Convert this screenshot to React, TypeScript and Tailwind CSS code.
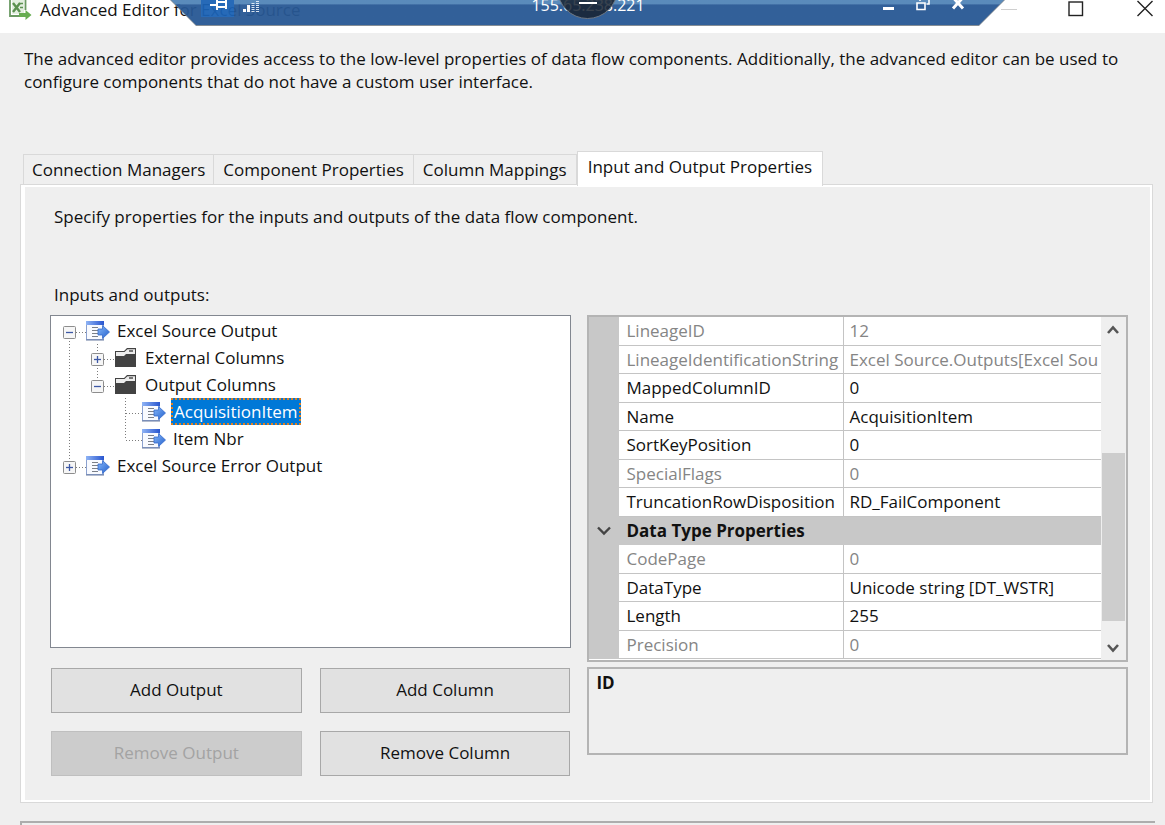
import React from "react";

type Guide = "plus" | "minus" | "plus-end" | "minus-end" | "minus-root" | "line" | "tee" | "corner" | "blank";

function GuideCell({ kind }: { kind: Guide }) {
  const dots = { stroke: "#7c7c7c", strokeWidth: 1, strokeDasharray: "1 2" };
  const box = kind.startsWith("plus") || kind.startsWith("minus");
  const top = kind !== "blank" && kind !== "minus-root";
  const bottom = kind === "line" || kind === "tee" || kind === "plus" || kind === "minus-root";
  return (
    <svg width="28" height="27" viewBox="0 0 28 27" className="shrink-0" aria-hidden="true">
      {top && <path d="M11.5 0V15" {...dots} />}
      {bottom && <path d="M11.5 15V27" {...dots} />}
      {kind !== "line" && kind !== "blank" && <path d="M12 15.5H28" {...dots} />}
      {box && (
        <>
          <rect x="5.5" y="9.5" width="12" height="12" rx="1" fill="#f6f6f6" stroke="#8d8d8d" />
          <path d="M8 15.5H15" stroke="#3d58a5" strokeWidth="1.3" />
          {kind.startsWith("plus") && <path d="M11.5 12V19" stroke="#3d58a5" strokeWidth="1.3" />}
        </>
      )}
    </svg>
  );
}

function OutputIcon() {
  return (
    <svg width="24" height="22" viewBox="0 0 24 22" className="shrink-0" aria-hidden="true">
      <defs>
        <linearGradient id="head" x1="0" x2="1">
          <stop offset="0" stopColor="#8fb4f5" />
          <stop offset="1" stopColor="#2855cf" />
        </linearGradient>
        <linearGradient id="arrow" x1="0" y1="0" x2="1" y2="1">
          <stop offset="0" stopColor="#86b8fa" />
          <stop offset="1" stopColor="#2460cc" />
        </linearGradient>
      </defs>
      <rect x="0.5" y="1.5" width="17" height="18" fill="#f8faff" stroke="#8ba1cf" />
      <rect x="0" y="1" width="18" height="4" fill="url(#head)" />
      <path d="M0 20H18" stroke="#687aa0" strokeWidth="1" />
      <path d="M6 7.5H12M6 10.5H12M6 13.5H12M6 16.5H12" stroke="#7a7f88" strokeWidth="1.2" />
      <path d="M12 9H16.5V5.5L23.5 12L16.5 18.5V15H12Z" fill="url(#arrow)" stroke="#356bcc" strokeWidth="0.8" />
    </svg>
  );
}

function FolderIcon() {
  return (
    <svg width="24" height="22" viewBox="0 0 24 22" className="shrink-0" aria-hidden="true">
      <path d="M1 20V4H10L13 1H22V20Z" fill="#424242" />
      <path d="M2 5H10.5L13.5 2.2H21V7H12L10 9H2Z" fill="#ececec" />
      <path d="M15 4H19" stroke="#424242" strokeWidth="1.4" />
    </svg>
  );
}

interface Node {
  label: string;
  guides: Guide[];
  folder?: boolean;
  selected?: boolean;
}

const nodes: Node[] = [
  { label: "Excel Source Output", guides: ["minus-root"] },
  { label: "External Columns", guides: ["line", "plus"], folder: true },
  { label: "Output Columns", guides: ["line", "minus-end"], folder: true },
  { label: "AcquisitionItem", guides: ["line", "blank", "tee"], selected: true },
  { label: "Item Nbr", guides: ["line", "blank", "corner"] },
  { label: "Excel Source Error Output", guides: ["plus-end"] },
];

interface Property {
  name: string;
  value?: string;
  readOnly?: boolean;
}

const properties: Property[] = [
  { name: "LineageID", value: "12", readOnly: true },
  { name: "LineageIdentificationString", value: "Excel Source.Outputs[Excel Sou", readOnly: true },
  { name: "MappedColumnID", value: "0" },
  { name: "Name", value: "AcquisitionItem" },
  { name: "SortKeyPosition", value: "0" },
  { name: "SpecialFlags", value: "0", readOnly: true },
  { name: "TruncationRowDisposition", value: "RD_FailComponent" },
  { name: "Data Type Properties" },
  { name: "CodePage", value: "0", readOnly: true },
  { name: "DataType", value: "Unicode string [DT_WSTR]" },
  { name: "Length", value: "255" },
  { name: "Precision", value: "0", readOnly: true },
];

const tabs = ["Connection Managers", "Component Properties", "Column Mappings"];

function TitleBar() {
  return (
    <header className="flex h-[33px] items-start bg-white pl-2">
      <svg width="24" height="20" viewBox="0 0 24 20" className="mr-2 shrink-0" aria-hidden="true">
        <path d="M2 0V16H15" fill="none" stroke="#6b9a63" strokeWidth="1.8" />
        <path d="M17.5 0V10" fill="none" stroke="#6b9a63" strokeWidth="1.8" />
        <path d="M4 0H16V14H4Z" fill="#e3efe0" />
        <path d="M5 3L12 12M12 3L5 12" stroke="#5b9150" strokeWidth="2.4" />
        <path d="M11 3.5H15M12 7.5H15" stroke="#5b9150" strokeWidth="1.3" />
        <path d="M11 13H17.5V10L23.5 15L17.5 20V17H11Z" fill="#67ad51" />
      </svg>
      <h1 className="grow text-[17px] leading-5 whitespace-nowrap">Advanced Editor for Excel Source</h1>
      <div className="flex">
        <button aria-label="Minimize" className="flex w-[68px] justify-center">
          <svg width="16" height="18" viewBox="0 0 16 18"><path d="M0 9.5H16" stroke="#cfcfcf" /></svg>
        </button>
        <button aria-label="Maximize" className="flex w-[66px] justify-center">
          <svg width="16" height="18" viewBox="0 0 16 18"><rect x="1" y="2" width="13.5" height="13.5" fill="none" stroke="#222" strokeWidth="1.4" /></svg>
        </button>
        <button aria-label="Close" className="flex w-[56px] justify-center pl-4">
          <svg width="16" height="18" viewBox="0 0 16 18"><path d="M0.5 1L15.5 16M15.5 1L0.5 16" stroke="#222" strokeWidth="1.4" /></svg>
        </button>
      </div>
    </header>
  );
}

function RemoteBar() {
  return (
    <div className="absolute top-0 right-[160px] left-[170px] h-[26px] bg-[#808890] [clip-path:polygon(0_0,100%_0,calc(100%_-_26px)_100%,26px_100%)] opacity-95">
      <div className="h-[25px] bg-linear-to-b from-[#5285b8] from-15% via-[#285894] via-20% to-[#285894] [clip-path:polygon(1px_0,calc(100%_-_1px)_0,calc(100%_-_26px)_100%,26px_100%)]">
        <div className="flex h-full items-start justify-between pr-10 pl-[31px]">
          <div className="flex w-[92px] gap-2">
            <button aria-label="Pin" className="flex h-[17px] w-[33px] justify-center bg-[#1c62b5] pl-[3px]">
              <svg width="20" height="11" viewBox="0 0 20 11"><path d="M1 5H8M8 0V10M8 2H17M8 7H17M17 0V9" fill="none" stroke="#fff" strokeWidth="2" /></svg>
            </button>
            <svg width="18" height="13" viewBox="0 0 18 13" role="img" aria-label="Signal strength">
              <path d="M2.5 12V9M6.5 12V5" stroke="#fff" strokeWidth="3" />
              <path d="M11 12V2M15.5 12V0" stroke="#dce8f5" strokeWidth="3" strokeDasharray="1 1" />
            </svg>
          </div>
          <span className="text-base leading-[11px] text-white">155.65.238.221</span>
          <div className="flex w-[82px] justify-between">
            <button aria-label="Minimize session"><svg width="12" height="12" viewBox="0 0 12 12"><path d="M0 8.5H11" stroke="#fff" strokeWidth="3" /></svg></button>
            <button aria-label="Restore session"><svg width="15" height="12" viewBox="0 0 15 12"><path d="M1 3H9V9.5H1ZM4 0V1M13 0V4H10.5" fill="none" stroke="#fff" strokeWidth="1.6" /></svg></button>
            <button aria-label="Close session"><svg width="14" height="12" viewBox="0 0 14 12"><path d="M2.5 -2L12 8.5M11.5 -2L2 8.5" stroke="#fff" strokeWidth="3" /></svg></button>
          </div>
        </div>
      </div>
      <div className="absolute inset-x-0 -top-[42px] mx-auto flex size-[61px] items-end justify-center rounded-full border border-[#66707c] bg-[#0b1626]/85 pb-[14px]">
        <div className="h-[2px] w-[18px] bg-white" />
      </div>
    </div>
  );
}

function PropertyGrid() {
  return (
    <div className="flex h-[347px] overflow-hidden border-2 border-[#b4b4b4] bg-white">
      <table className="h-[342px] min-w-0 grow table-fixed border-separate border-spacing-0">
        <colgroup>
          <col className="w-[30px]" />
          <col className="w-[225px]" />
          <col />
        </colgroup>
        <tbody>
          {properties.map((p) =>
            p.value === undefined ? (
              <tr key={p.name} className="h-[28px] bg-[#c8c8c8]">
                <td className="p-0">
                  <svg width="14" height="10" viewBox="0 0 14 10" className="mx-auto" aria-hidden="true">
                    <path d="M1 1.5L7 7.5L13 1.5" fill="none" stroke="#444" strokeWidth="2.4" />
                  </svg>
                </td>
                <th colSpan={2} scope="rowgroup" className="p-0 pl-[7px] text-left leading-6 font-bold">
                  {p.name}
                </th>
              </tr>
            ) : (
              <tr key={p.name} className={p.readOnly ? "text-[#858585] odd:h-[29px] even:h-[28px]" : "odd:h-[29px] even:h-[28px]"}>
                <td className="bg-[#c8c8c8] p-0" />
                <th scope="row" className="border-r border-b border-[#c4c4c4] p-0 pl-[7px] text-left leading-6 font-normal whitespace-nowrap">
                  {p.name}
                </th>
                <td className="overflow-hidden border-b border-[#c4c4c4] p-0 pl-[5px] leading-6 whitespace-nowrap">{p.value}</td>
              </tr>
            ),
          )}
        </tbody>
      </table>
      <div className="flex w-[25px] shrink-0 flex-col bg-[#efefef] px-px">
        <button aria-label="Scroll up" className="flex h-[25px] items-center justify-center">
          <svg width="12" height="10" viewBox="0 0 12 10"><path d="M1 8L6 2.5L11 8" fill="none" stroke="#555" strokeWidth="2.6" /></svg>
        </button>
        <div className="grow-[112]" />
        <div className="h-[168px] bg-[#cdcdcd]" />
        <div className="grow-[14]" />
        <button aria-label="Scroll down" className="flex h-[25px] items-center justify-center">
          <svg width="12" height="10" viewBox="0 0 12 10"><path d="M1 2L6 7.5L11 2" fill="none" stroke="#555" strokeWidth="2.6" /></svg>
        </button>
      </div>
    </div>
  );
}

function PushButton({ children, disabled }: { children: string; disabled?: boolean }) {
  return (
    <button
      disabled={disabled}
      className="h-[45px] border border-[#a8a8a8] bg-[#e1e1e1] pb-px disabled:border-[#bfbfbf] disabled:bg-[#cccccc] disabled:text-[#a3a3a3]"
    >
      {children}
    </button>
  );
}

export default function App() {
  return (
    <div className="relative flex min-h-screen flex-col overflow-hidden bg-[#efefef] font-['Open_Sans','Noto_Sans',sans-serif] text-[17px] text-[#111]">
      <TitleBar />
      <RemoteBar />
      <p className="mt-[14px] pr-10 pl-6 leading-[23px]">
        The advanced editor provides access to the low-level properties of data flow components. Additionally, the advanced editor can be used to configure components that do not have a custom user interface.
      </p>
      <main className="mt-[58px] mr-3 ml-5">
        <div role="tablist" className="flex h-[33px] items-end pl-[3px]">
          {tabs.map((t) => (
            <button key={t} role="tab" aria-selected="false" className="h-[30px] border-t border-r border-[#d9d9d9] px-[9px] whitespace-nowrap first:border-l first:px-2">
              {t}
            </button>
          ))}
          <button role="tab" aria-selected="true" className="relative -mb-[2px] h-[35px] border border-b-0 border-[#d9d9d9] bg-white px-[10px] pb-1 whitespace-nowrap">
            Input and Output Properties
          </button>
        </div>
        <section className="border border-[#d9d9d9]">
          <div className="border-2 border-l-4 border-white pt-[18px] pr-[22px] pb-6 pl-[25px]">
            <p className="pl-1 leading-6">Specify properties for the inputs and outputs of the data flow component.</p>
            <h2 id="io" className="mt-[54px] pl-1 leading-6">Inputs and outputs:</h2>
            <div className="mt-[8px] grid grid-cols-[521fr_540fr] gap-4">
              <div>
                <ul role="tree" aria-labelledby="io" className="h-[333px] border border-[#828790] bg-white pt-px pl-[7px]">
                  {nodes.map((n) => (
                    <li key={n.label} role="treeitem" aria-selected={n.selected ?? false} className="flex h-[27px] items-center">
                      {n.guides.map((g, i) => (
                        <GuideCell key={i} kind={g} />
                      ))}
                      {n.folder ? <FolderIcon /> : <OutputIcon />}
                      <span className={n.selected ? "ml-[5px] border-2 border-dotted border-[#e08020] bg-[#0078d7] px-px leading-[23px] text-white" : "ml-[7px] leading-[23px]"}>
                        {n.label}
                      </span>
                    </li>
                  ))}
                </ul>
                <div className="mt-5 grid grid-cols-2 gap-[18px] px-px">
                  <PushButton>Add Output</PushButton>
                  <PushButton>Add Column</PushButton>
                  <PushButton disabled>Remove Output</PushButton>
                  <PushButton>Remove Column</PushButton>
                </div>
              </div>
              <div className="min-w-0">
                <PropertyGrid />
                <div className="mt-[5px] h-[88px] border-2 border-[#b4b4b4] pl-[7px] leading-7 font-bold">ID</div>
              </div>
            </div>
          </div>
        </section>
      </main>
      <footer className="mt-[18px] mr-[10px] ml-5 min-h-1 grow border-t-2 border-l-2 border-[#adadad]" />
    </div>
  );
}
